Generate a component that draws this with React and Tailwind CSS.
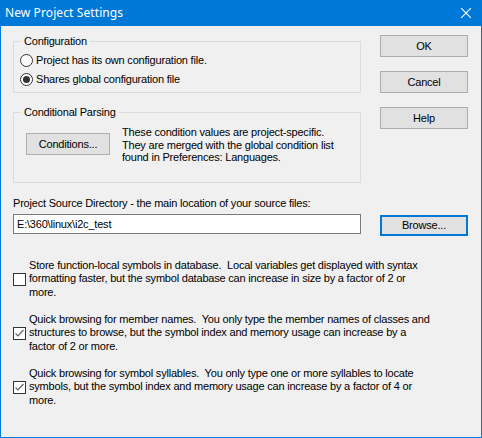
import { useState } from 'react';

const font = { fontFamily: '"Liberation Sans", Arial, sans-serif' };

function Radio({ checked, label, onClick }) {
  return (
    <div className="flex items-center h-[19px] cursor-default" onClick={onClick}>
      <span className="w-[13px] h-[13px] rounded-full border border-[#333333] bg-white flex items-center justify-center">
        {checked && <span className="w-[7px] h-[7px] rounded-full bg-[#333333]" />}
      </span>
      <span className="ml-[3px]">{label}</span>
    </div>
  );
}

function Check({ checked, onClick }) {
  return (
    <span onClick={onClick}
      className="w-[13px] h-[13px] shrink-0 border border-[#333333] bg-white flex items-center justify-center">
      {checked && (
        <svg width="11" height="11" viewBox="0 0 11 11">
          <path d="M1.5 5.5 L4 8 L9.5 2" fill="none" stroke="#666666" strokeWidth="1.2" />
        </svg>
      )}
    </span>
  );
}

function Button({ children, className = '' }) {
  return (
    <button className={`bg-[#e1e1e1] border border-[#adadad] text-black text-[11px] tracking-[-0.2px] flex items-center justify-center ${className}`}>
      {children}
    </button>
  );
}

function Group({ title, className = '', children }) {
  return (
    <div className={`relative border border-[#dcdcdc] ${className}`}>
      <span className="absolute -top-[7px] left-[7px] px-[3px] bg-[#f0f0f0] leading-[13px]">{title}</span>
      {children}
    </div>
  );
}

const options = [
  {
    lines: [
      'Store function-local symbols in database.  Local variables get displayed with syntax',
      'formatting faster, but the symbol database can increase in size by a factor of 2 or',
      'more.',
    ],
    on: false,
  },
  {
    lines: [
      'Quick browsing for member names.  You only type the member names of classes and',
      'structures to browse, but the symbol index and memory usage can increase by a',
      'factor of 2 or more.',
    ],
    on: true,
  },
  {
    lines: [
      'Quick browsing for symbol syllables.  You only type one or more syllables to locate',
      'symbols, but the symbol index and memory usage can increase by a factor of 4 or',
      'more.',
    ],
    on: true,
  },
];

export default function App() {
  const [shared, setShared] = useState(true);
  const [checks, setChecks] = useState(options.map(o => o.on));

  return (
    <div className="w-[482px] h-[438px] bg-[#f0f0f0] border border-[#0078d7] border-t-0 flex flex-col text-[11px] tracking-[-0.2px] text-black overflow-hidden" style={font}>
      {/* title bar */}
      <div className="h-[26px] shrink-0 bg-[#0078d7] flex items-center justify-between pl-[4px] pr-[10px]">
        <span className="text-white text-[12px] tracking-[0.1px]" style={{ fontFamily: '"Noto Sans", "Liberation Sans", sans-serif' }}>New Project Settings</span>
        <svg width="10" height="10" viewBox="0 0 10 10">
          <path d="M0 0 L10 10 M10 0 L0 10" stroke="white" strokeWidth="1.1" />
        </svg>
      </div>

      <div className="px-[12px] pt-[9px] flex flex-col">
        <div className="flex">
          <div className="w-[348px] flex flex-col">
            <Group title="Configuration" className="mt-[6px] h-[52px] pt-[9px] pl-[6px]">
              <Radio checked={!shared} label="Project has its own configuration file." onClick={() => setShared(false)} />
              <Radio checked={shared} label="Shares global configuration file" onClick={() => setShared(true)} />
            </Group>
            <Group title="Conditional Parsing" className="mt-[19px] h-[71px] pl-[12px] flex items-start">
              <Button className="w-[84px] h-[22px] mt-[20px] shrink-0">Conditions...</Button>
              <p className="ml-[12px] mt-[13px] leading-[12.6px]">
                These condition values are project-specific.<br />
                They are merged with the global condition list<br />
                found in Preferences: Languages.
              </p>
            </Group>
          </div>
          <div className="ml-[19px] w-[88px] flex flex-col gap-[14px]">
            <Button className="w-[88px] h-[22px]">OK</Button>
            <Button className="w-[88px] h-[22px]">Cancel</Button>
            <Button className="w-[88px] h-[22px]">Help</Button>
          </div>
        </div>

        <p className="mt-[14px] leading-[13px]">Project Source Directory - the main location of your source files:</p>
        <div className="flex items-start mt-[4px]">
          <div className="w-[348px] h-[20px] bg-white border border-[#7a7a7a] flex items-center pl-[3px]">
            E:\360\linux\i2c_test
          </div>
          <Button className="ml-[19px] w-[88px] h-[21px] mt-[1px] !border-2 !border-[#0078d7]">Browse...</Button>
        </div>

        <div className="mt-[23px] flex flex-col">
          {options.map((o, i) => (
            <div key={i} className="flex items-start h-[54px]">
              <div className="h-[40px] flex items-center">
                <Check checked={checks[i]} onClick={() => setChecks(checks.map((c, j) => (j === i ? !c : c)))} />
              </div>
              <p className="ml-[3px] leading-[13.33px] whitespace-pre">
                {o.lines.join('\n')}
              </p>
            </div>
          ))}
        </div>
      </div>
    </div>
  );
}
